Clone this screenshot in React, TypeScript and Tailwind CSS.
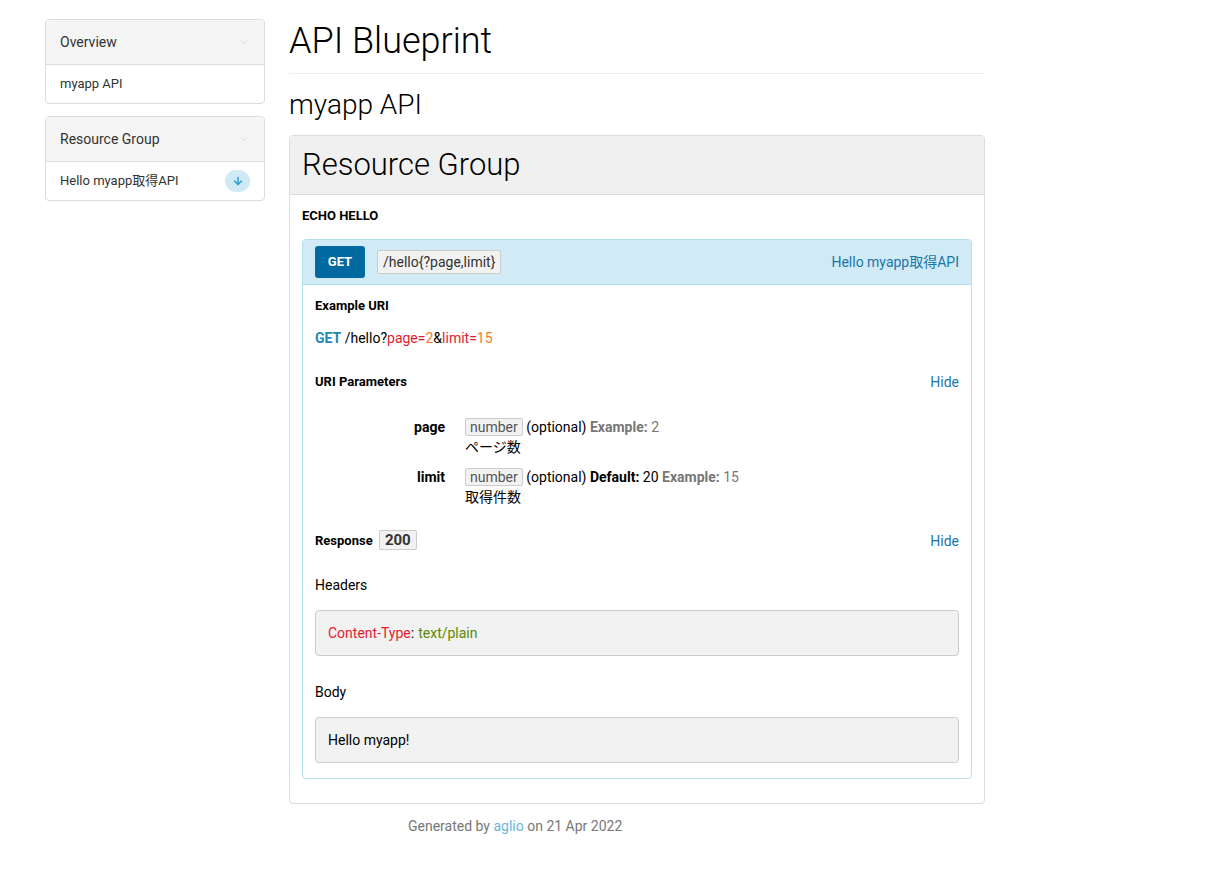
import { ChevronDown, ArrowDown } from "lucide-react";

function NavPanel({ title, item, badge }: { title: string; item: string; badge?: boolean }) {
  return (
    <div className="rounded border border-[#ddd] bg-white overflow-hidden">
      <div className="flex items-center justify-between h-[45px] px-[14px] bg-[#f5f5f5] border-b border-[#ddd] text-[14px] text-[#333]">
        <span>{title}</span>
        <ChevronDown className="w-3 h-3 text-[#ccc]" strokeWidth={1.5} />
      </div>
      <div className="flex items-center justify-between h-[38px] px-[14px] text-[13px] text-[#333]">
        <span>{item}</span>
        {badge && (
          <span className="flex items-center justify-center w-[25px] h-[22px] rounded-full bg-[#cfe9f5]">
            <ArrowDown className="w-3 h-3 text-[#2a9fd6]" strokeWidth={3} />
          </span>
        )}
      </div>
    </div>
  );
}

function Chip({ children }: { children: React.ReactNode }) {
  return (
    <span className="inline-block px-[4px] leading-[16px] border border-[#ccc] rounded-[2px] bg-[#f2f2f2] text-[#555]">
      {children}
    </span>
  );
}

export default function App() {
  return (
    <div className="min-h-[875px] bg-white text-[14px] text-black" style={{ fontFamily: "Roboto, 'Noto Sans CJK JP', sans-serif" }}>
      <div className="flex gap-6 pl-[45px] pt-[19px]">
        <div className="w-[220px] flex flex-col gap-[12px]">
          <NavPanel title="Overview" item="myapp API" />
          <NavPanel title="Resource Group" item="Hello myapp取得API" badge />
        </div>
        <div className="w-[696px]">
          <h1 className="text-[36px] font-light leading-[44px] pb-[10px] border-b border-[#eee]">API Blueprint</h1>
          <h2 className="text-[28px] font-light leading-[36px] mt-[13px] mb-[12px]">myapp API</h2>
          <div className="rounded border border-[#ddd] overflow-hidden">
            <div className="h-[59px] flex items-center px-[12px] bg-[#f0f0f0] border-b border-[#ddd] text-[31px] font-light">
              Resource Group
            </div>
            <div className="px-[12px] pt-[11px] pb-[24px]">
              <div className="text-[13px] leading-[20px] font-bold mb-[13px]">ECHO HELLO</div>
              <div className="rounded border border-[#b5e0ee] overflow-hidden">
                <div className="h-[45px] flex items-center px-[12px] bg-[#d0eaf6] border-b border-[#b5e0ee]">
                  <span className="w-[50px] h-[32px] flex items-center justify-center rounded-[3px] bg-[#0069a0] text-white font-bold text-[13px]">GET</span>
                  <span className="ml-[12px] px-[5px] h-[24px] flex items-center border border-[#ccc] rounded-[2px] bg-[#f2f2f2] text-[#333]">/hello{"{?page,limit}"}</span>
                  <span className="ml-auto text-[#1a76a8] text-[14px]">Hello myapp取得API</span>
                </div>
                <div className="px-[12px] pt-[11px] pb-[15px] leading-[20px]">
                  <div className="font-bold text-[13px]">Example URI</div>
                  <div className="mt-[12px] text-[14px]">
                    <span className="font-bold text-[#1f88b5]">GET</span> /hello?<span className="text-[#e41b2f]">page=</span><span className="text-[#f57b28]">2</span>&amp;<span className="text-[#e41b2f]">limit=</span><span className="text-[#f57b28]">15</span>
                  </div>
                  <div className="mt-[24px] flex justify-between text-[13px]">
                    <span className="font-bold">URI Parameters</span>
                    <span className="text-[#1a76a8] text-[14px]">Hide</span>
                  </div>
                  <div className="mt-[25px] flex flex-col gap-[10px] text-[14px]">
                    <div className="flex">
                      <div className="w-[150px] text-right font-bold text-[14px] pr-[20px]">page</div>
                      <div>
                        <div><Chip>number</Chip> (optional) <span className="font-bold text-[#777]">Example:</span> <span className="text-[#777]">2</span></div>
                        <div>ページ数</div>
                      </div>
                    </div>
                    <div className="flex">
                      <div className="w-[150px] text-right font-bold text-[14px] pr-[20px]">limit</div>
                      <div>
                        <div><Chip>number</Chip> (optional) <span className="font-bold">Default:</span> 20 <span className="font-bold text-[#777]">Example:</span> <span className="text-[#777]">15</span></div>
                        <div>取得件数</div>
                      </div>
                    </div>
                  </div>
                  <div className="mt-[23px] flex justify-between items-center text-[13px]">
                    <span className="font-bold">Response <span className="ml-[3px] px-[5px] border border-[#ccc] rounded-[2px] bg-[#f2f2f2] text-[#333] text-[15px] font-bold">200</span></span>
                    <span className="text-[#1a76a8] text-[14px] font-normal">Hide</span>
                  </div>
                  <div className="mt-[24px] text-[14px]">Headers</div>
                  <div className="mt-[15px] h-[46px] flex items-center px-[12px] rounded border border-[#ccc] bg-[#f2f2f2]">
                    <span className="text-[#e41b2f]">Content-Type</span>: <span className="ml-[4px] text-[#5a8a00]">text/plain</span>
                  </div>
                  <div className="mt-[26px] text-[14px]">Body</div>
                  <div className="mt-[15px] h-[46px] flex items-center px-[12px] rounded border border-[#ccc] bg-[#f2f2f2]">
                    Hello myapp!
                  </div>
                </div>
              </div>
            </div>
          </div>
          <div className="mt-[12px] pl-[119px] text-[14px] leading-[20px] text-[#777]">
            Generated by <span className="text-[#6bb5de]">aglio</span> on 21 Apr 2022
          </div>
        </div>
      </div>
    </div>
  );
}
